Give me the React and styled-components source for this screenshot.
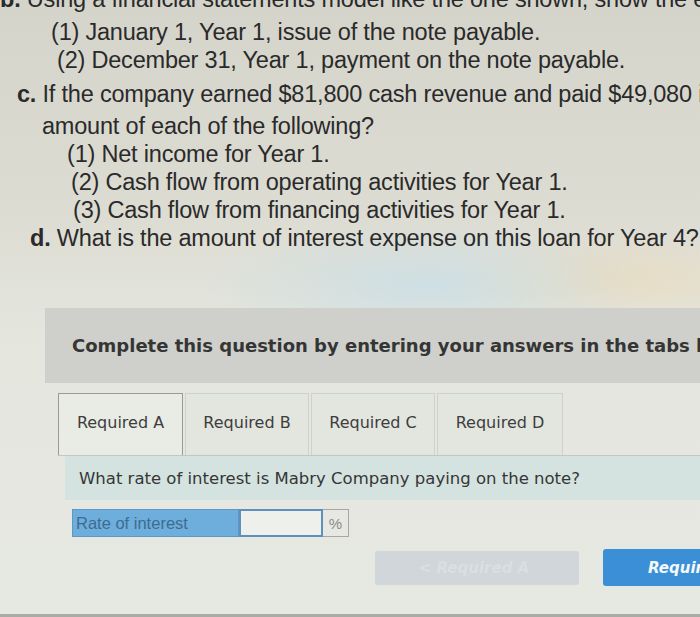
import styled, { createGlobalStyle } from "styled-components";

const GlobalStyle = createGlobalStyle`
  html, body {
    margin: 0;
    padding: 0;
    background: #dcdcd4;
  }
`;

const Page = styled.div`
  width: 700px;
  height: 617px;
  overflow: hidden;
  box-sizing: border-box;
  border-bottom: 3px solid #a9aba6;
  background:
    radial-gradient(ellipse 320px 90px at 430px 285px, rgba(190, 220, 235, 0.55), transparent 70%),
    radial-gradient(ellipse 260px 70px at 620px 280px, rgba(240, 215, 170, 0.45), transparent 70%),
    linear-gradient(180deg, #d5d4cb 0%, #dddcd3 35%, #e4e6de 55%, #e6e8e2 100%);
`;

const Problem = styled.div`
  margin-top: -15px;
  font-family: "Liberation Sans", Arial, sans-serif;
  font-size: 23.5px;
  line-height: 28px;
  color: #2a2a2a;
  white-space: nowrap;
  letter-spacing: -0.2px;
`;

const Line = styled.div`
  padding-left: ${(p) => p.$indent}px;
  margin-top: ${(p) => p.$gap || 0}px;
  & > b {
    font-weight: bold;
  }
`;

const Question = styled.div`
  margin-top: 56px;
  margin-left: 45px;
  font-family: "DejaVu Sans", Verdana, sans-serif;
`;

const Banner = styled.div`
  height: 75px;
  background: #cfd0cb;
  display: flex;
  align-items: center;
  padding-left: 27px;
  font-size: 18px;
  font-weight: bold;
  color: #353535;
  white-space: nowrap;
`;

const TabBar = styled.div`
  margin-top: 10px;
  margin-left: 13px;
  display: flex;
  gap: 2px;
  border-bottom: 1px solid #c4c6c1;
`;

const Tab = styled.div`
  width: ${(p) => p.$w}px;
  height: 62px;
  box-sizing: border-box;
  display: flex;
  align-items: center;
  justify-content: center;
  font-size: 16px;
  color: #3d3d3d;
  background: ${(p) => (p.$active ? "#e9ebe5" : "#e3e5df")};
  border: 1px solid ${(p) => (p.$active ? "#9a9b97" : "#cfd1cc")};
  border-bottom: none;
  margin-bottom: ${(p) => (p.$active ? "-1px" : "0")};
  padding-bottom: 4px;
`;

const Panel = styled.div`
  margin-left: 20px;
  height: 44px;
  background: #d4e3df;
  display: flex;
  align-items: center;
  padding-left: 14px;
  font-size: 16.5px;
  color: #363636;
  white-space: nowrap;
`;

const InputRow = styled.div`
  margin-top: 9px;
  margin-left: 27px;
  display: flex;
  height: 28px;
  font-family: "Liberation Sans", Arial, sans-serif;
  font-size: 16.5px;
`;

const Label = styled.div`
  width: 167px;
  box-sizing: border-box;
  background: #6daedd;
  border: 1px solid #5d98c4;
  color: #3f6b8f;
  display: flex;
  align-items: center;
  padding-left: 3px;
`;

const Field = styled.input`
  width: 84px;
  height: 28px;
  box-sizing: border-box;
  border: 2px solid #5f8fbf;
  background: #eef0ec;
  outline: none;
  padding: 0 4px;
  font: inherit;
`;

const Unit = styled.div`
  width: 26px;
  box-sizing: border-box;
  border: 1px solid #a7a8a4;
  border-left: none;
  background: #e7e8e3;
  color: #8a8a87;
  display: flex;
  align-items: center;
  justify-content: center;
  font-size: 15px;
`;

const Actions = styled.div`
  margin-top: 12px;
  margin-left: 330px;
  display: flex;
  align-items: center;
  gap: 24px;
`;

const NavButton = styled.button`
  flex: none;
  width: ${(p) => p.$w}px;
  height: ${(p) => (p.$primary ? 37 : 34)}px;
  border: none;
  border-radius: 3px;
  font-family: "DejaVu Sans", Verdana, sans-serif;
  font-size: 15px;
  font-weight: bold;
  font-style: italic;
  color: ${(p) => (p.$primary ? "#f4f8fb" : "#d9dfe2")};
  background: ${(p) => (p.$primary ? "#3b8fd6" : "#d0d6d9")};
  text-align: ${(p) => (p.$primary ? "left" : "center")};
  padding-left: ${(p) => (p.$primary ? 45 : 0)}px;
`;

const problemLines = [
  { indent: 0, text: <><b>b.</b> Using a financial statements model like the one shown, show the effects of</> },
  { indent: 51, gap: 5, text: "(1) January 1, Year 1, issue of the note payable." },
  { indent: 57, text: "(2) December 31, Year 1, payment on the note payable." },
  { indent: 17, gap: 6, text: <><b>c.</b> If the company earned $81,800 cash revenue and paid $49,080 in cash expenses, what is the</> },
  { indent: 42, gap: 4, text: "amount of each of the following?" },
  { indent: 67, text: "(1) Net income for Year 1." },
  { indent: 71, text: "(2) Cash flow from operating activities for Year 1." },
  { indent: 73, text: "(3) Cash flow from financing activities for Year 1." },
  { indent: 30, text: <><b>d.</b> What is the amount of interest expense on this loan for Year 4?</> },
];

const tabs = [
  { label: "Required A", w: 125, active: true },
  { label: "Required B", w: 124 },
  { label: "Required C", w: 124 },
  { label: "Required D", w: 126 },
];

export default function App() {
  return (
    <>
      <GlobalStyle />
      <Page>
        <Problem>
          {problemLines.map((l, i) => (
            <Line key={i} $indent={l.indent} $gap={l.gap}>{l.text}</Line>
          ))}
        </Problem>
        <Question>
          <Banner>Complete this question by entering your answers in the tabs below.</Banner>
          <TabBar>
            {tabs.map((t) => (
              <Tab key={t.label} $w={t.w} $active={t.active}>{t.label}</Tab>
            ))}
          </TabBar>
          <Panel>What rate of interest is Mabry Company paying on the note?</Panel>
          <InputRow>
            <Label>Rate of interest</Label>
            <Field type="text" />
            <Unit>%</Unit>
          </InputRow>
          <Actions>
            <NavButton $w={204} disabled>&lt; Required A</NavButton>
            <NavButton $w={200} $primary>Required B &gt;</NavButton>
          </Actions>
        </Question>
      </Page>
    </>
  );
}
